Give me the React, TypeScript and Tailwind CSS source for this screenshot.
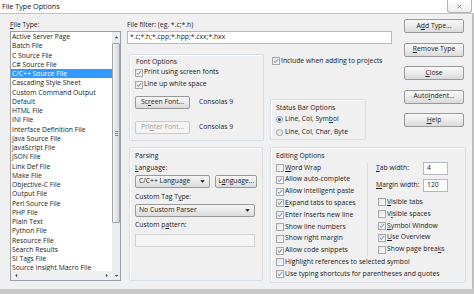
import clsx from "clsx";
import type { ReactNode } from "react";

const fileTypes = [
  "Active Server Page",
  "Batch File",
  "C Source File",
  "C# Source File",
  "C/C++ Source File",
  "Cascading Style Sheet",
  "Custom Command Output",
  "Default",
  "HTML File",
  "INI File",
  "Interface Definition File",
  "Java Source File",
  "JavaScript File",
  "JSON File",
  "Link Def File",
  "Make File",
  "Objective-C File",
  "Output File",
  "Perl Source File",
  "PHP File",
  "Plain Text",
  "Python File",
  "Resource File",
  "Search Results",
  "SI Tags File",
  "Source Insight Macro File",
];

function U({ children }: { children: ReactNode }) {
  return <span className="underline decoration-[0.5px] underline-offset-[1px]">{children}</span>;
}

function Btn({
  children,
  className,
  disabled,
}: {
  children: ReactNode;
  className?: string;
  disabled?: boolean;
}) {
  return (
    <div
      className={clsx(
        "flex items-center justify-center whitespace-nowrap rounded-[2px] border",
        disabled
          ? "border-[#c8cccf] bg-[#f4f4f4] text-[#a0a0a0]"
          : "border-[#999999] bg-linear-to-b from-[#f8f8f8] via-[#ececec] to-[#dadada] text-[#222]",
        className
      )}
    >
      {children}
    </div>
  );
}

function Box({ checked }: { checked?: boolean }) {
  return (
    <span className="flex h-[8px] w-[8px] shrink-0 items-center justify-center border border-[#a8a8a8] bg-linear-to-br from-[#e4e4e4] to-[#fcfcfc]">
      {checked && (
        <svg viewBox="0 0 8 8" className="h-[6px] w-[6px]">
          <path d="M1.3 4.3 L3.1 6 L6.7 1.5" stroke="#4868a0" strokeWidth="1.1" fill="none" />
        </svg>
      )}
    </span>
  );
}

function CheckRow({
  checked,
  children,
  className,
}: {
  checked?: boolean;
  children: ReactNode;
  className?: string;
}) {
  return (
    <div className={clsx("flex items-center gap-[1px] whitespace-nowrap", className)}>
      <Box checked={checked} />
      <span>{children}</span>
    </div>
  );
}

function RadioRow({ checked, children }: { checked?: boolean; children: ReactNode }) {
  return (
    <div className="flex h-[13px] items-center gap-[2px] whitespace-nowrap">
      <span className="flex h-[7px] w-[7px] items-center justify-center rounded-full border border-[#a0a0a0] bg-linear-to-br from-[#dcdcdc] to-[#fafafa]">
        {checked && <span className="h-[3px] w-[3px] rounded-full bg-[#2a66b8]" />}
      </span>
      <span>{children}</span>
    </div>
  );
}

function Group({ className, children }: { className?: string; children: ReactNode }) {
  return (
    <div className={clsx("rounded-[2px] border border-[#d5dfe5] shadow-[inset_1px_1px_0_#ffffff]", className)}>
      {children}
    </div>
  );
}

function Arrow({ dir }: { dir: "up" | "down" | "left" | "right" }) {
  const d = {
    up: "M1 5 L4 2 L7 5 Z",
    down: "M1 3 L4 6 L7 3 Z",
    left: "M5 1 L2 4 L5 7 Z",
    right: "M3 1 L6 4 L3 7 Z",
  }[dir];
  return (
    <svg viewBox="0 0 8 8" className="h-[5px] w-[5px]">
      <path d={d} fill="#4a4a4a" />
    </svg>
  );
}

function Combo({ text, className }: { text: string; className?: string }) {
  return (
    <div
      className={clsx(
        "flex h-[13px] items-center justify-between rounded-[2px] border border-[#999999] bg-linear-to-b from-[#f6f6f6] to-[#dcdcdc] pl-[3px] pr-[4px] text-[#222]",
        className
      )}
    >
      <span className="whitespace-nowrap">{text}</span>
      <svg viewBox="0 0 8 8" className="h-[5px] w-[5px]">
        <path d="M0.5 2 L4 6 L7.5 2 Z" fill="#111" />
      </svg>
    </div>
  );
}

function FileList() {
  return (
    <div className="flex h-[250px] w-[111px] border border-[#9aa0a8] bg-white">
      <div className="flex w-[101px] flex-col">
        <div className="h-[239px] overflow-hidden">
          {fileTypes.map((t, i) => (
            <div
              key={t}
              className={clsx(
                "h-[9.25px] whitespace-nowrap pl-[1px] leading-[9.25px]",
                i === 4 ? "bg-[#3399ff] text-white" : "text-[#222]"
              )}
            >
              {t}
            </div>
          ))}
        </div>
        <div className="flex h-[9px] items-center justify-between bg-[#f0f0f0] px-[3px]">
          <Arrow dir="left" />
          <Arrow dir="right" />
        </div>
      </div>
      <div className="flex w-[8px] flex-col bg-[#ececec]">
        <div className="flex h-[10px] items-center justify-center">
          <Arrow dir="up" />
        </div>
        <div className="mt-[1px] flex h-[180px] flex-col items-center justify-center gap-[1px] rounded-[1px] border border-[#a4a4a4] bg-linear-to-r from-[#f2f2f2] to-[#d8d8d8]">
          <span className="h-px w-[3px] bg-[#8a8a8a]" />
          <span className="h-px w-[3px] bg-[#8a8a8a]" />
          <span className="h-px w-[3px] bg-[#8a8a8a]" />
        </div>
        <div className="flex-1" />
        <div className="flex h-[10px] items-center justify-center">
          <Arrow dir="down" />
        </div>
      </div>
    </div>
  );
}

export default function App() {
  return (
    <div className="flex h-[294px] w-[474px] flex-col overflow-hidden bg-[#c8c8c8] font-['Open_Sans',sans-serif] text-[6.8px] leading-none text-[#222]">
      {/* title bar */}
      <div className="flex h-[14px] shrink-0 items-start justify-between border-b border-[#c4c4c4] bg-white pl-[2px]">
        <span className="mt-[3px] text-[7.2px] text-[#111]">File Type Options</span>
        <div className="mr-[2px] flex h-[13px] w-[25px] items-center justify-center rounded-b-[3px] border border-t-0 border-[#b5b5b5] bg-linear-to-b from-white to-[#ededed]">
          <svg viewBox="0 0 8 8" className="h-[5px] w-[5px]">
            <path d="M1 1 L7 7 M7 1 L1 7" stroke="#7a7a7a" strokeWidth="1.2" />
          </svg>
        </div>
      </div>

      {/* dialog body */}
      <div className="mr-[1px] flex h-[275px] shrink-0 border-r border-[#b8b8b8] bg-[#f0f0f0] pl-[10px] pt-[5px]">
        {/* file type list */}
        <div className="flex flex-col">
          <div className="h-[12px] leading-[12px]">
            <U>F</U>ile Type:
          </div>
          <FileList />
        </div>

        {/* right side */}
        <div className="ml-[6px] flex flex-col">
          <div className="flex">
            <div className="flex w-[265px] flex-col">
              <div className="h-[12px] leading-[12px]">File filter: (eg. *.c;*.h)</div>
              <div className="flex h-[13px] items-center border border-[#b5b8bf] bg-white pl-[2px]">
                *.c;*.h;*.cpp;*.hpp;*.cxx;*.hxx
              </div>

              <div className="mt-[10px] flex gap-[6px] pl-[2px]">
                <Group className="flex h-[87px] w-[135px] flex-col pl-[5px]">
                  <div className="h-[11.5px] pl-[1px] pt-[1px] leading-[11.5px]">Font Options</div>
                  <CheckRow checked className="h-[12px]">
                    Print using screen fonts
                  </CheckRow>
                  <CheckRow checked className="h-[12px]">
                    Line up white space
                  </CheckRow>
                  <div className="mt-[5.5px] flex items-center">
                    <Btn className="h-[13px] w-[55px]">
                      Sc<U>r</U>een Font...
                    </Btn>
                    <span className="ml-[9px]">Consolas 9</span>
                  </div>
                  <div className="mt-[12px] flex items-center">
                    <Btn disabled className="h-[13px] w-[55px]">
                      Pri<U>n</U>ter Font...
                    </Btn>
                    <span className="ml-[9px]">Consolas 9</span>
                  </div>
                </Group>

                <div className="flex w-[96px] flex-col">
                  <CheckRow checked className="mt-[2px] h-[10px] pl-[2px]">
                    Include when adding to projects
                  </CheckRow>
                  <Group className="mt-[33px] flex h-[41px] flex-col pl-[5px] pt-[1.5px]">
                    <div className="h-[11px] leading-[11px]">Status Bar Options</div>
                    <RadioRow checked>
                      Line, Col, Sym<U>b</U>ol
                    </RadioRow>
                    <RadioRow>Line, Col, Char, Byte</RadioRow>
                  </Group>
                </div>
              </div>
            </div>

            {/* buttons */}
            <div className="ml-[12px] flex w-[60px] flex-col gap-[9.5px]">
              <Btn className="h-[14px]">
                A<U>d</U>d Type...
              </Btn>
              <Btn className="h-[14px]">
                <U>R</U>emove Type
              </Btn>
              <Btn className="h-[14px]">
                <U>C</U>lose
              </Btn>
              <Btn className="h-[14px]">
                Auto <U>I</U>ndent...
              </Btn>
              <Btn className="h-[14px]">
                <U>H</U>elp
              </Btn>
            </div>
          </div>

          <div className="mt-[6px] flex gap-[7px] pl-[2px]">
            {/* parsing */}
            <Group className="flex h-[134px] w-[134px] flex-col px-[5px] pt-[1.5px]">
              <div className="h-[11px] leading-[11px]">Parsing</div>
              <div className="mt-[1px] h-[12px] leading-[12px]">
                <U>L</U>anguage:
              </div>
              <div className="mt-[1.5px] flex gap-[5px]">
                <Combo text="C/C++ Language" className="w-[76px]" />
                <Btn className="h-[13px] w-[42px]">
                  L<U>a</U>nguage...
                </Btn>
              </div>
              <div className="mt-[3px] h-[12px] leading-[12px]">
                Custom Tag T<U>y</U>pe:
              </div>
              <Combo text="No Custom Parser" className="mt-[1px] w-[120px]" />
              <div className="mt-[2px] h-[12px] leading-[12px]">
                Custom p<U>a</U>ttern:
              </div>
              <div className="mt-[3px] h-[13px] w-[120px] border border-[#d0d2d6] bg-[#f4f4f4]" />
            </Group>

            {/* editing */}
            <Group className="flex h-[136px] w-[196px] flex-col pl-[5px] pt-[1.5px]">
              <div className="h-[11px] leading-[11px]">Editing Options</div>
              <div className="mt-[1.6px] flex">
                <div className="flex w-[91px] flex-col">
                  <CheckRow className="h-[11.8px]">
                    <U>W</U>ord Wrap
                  </CheckRow>
                  <CheckRow checked className="h-[11.8px]">
                    Allow auto-complete
                  </CheckRow>
                  <CheckRow checked className="h-[11.8px]">
                    Allow intelligent paste
                  </CheckRow>
                  <CheckRow checked className="h-[11.8px]">
                    <U>E</U>xpand tabs to spaces
                  </CheckRow>
                  <CheckRow checked className="h-[11.8px]">
                    Enter inserts new line
                  </CheckRow>
                  <CheckRow className="h-[11.8px]">Show line numbers</CheckRow>
                  <CheckRow className="h-[11.8px]">Show right margin</CheckRow>
                  <CheckRow checked className="h-[11.8px]">
                    Allow code snippets
                  </CheckRow>
                </div>
                <div className="mt-[1px] h-[93px] w-px bg-[#d5dfe5]" />
                <div className="flex flex-col pl-[8px]">
                  <div className="flex h-[13px] items-center">
                    <span className="w-[47px]">
                      <U>T</U>ab width:
                    </span>
                    <span className="flex h-[13px] w-[25px] items-center border border-[#b5b8bf] bg-white pl-[3px]">
                      4
                    </span>
                  </div>
                  <div className="mt-[4px] flex h-[13px] items-center">
                    <span className="w-[47px]">
                      <U>M</U>argin width:
                    </span>
                    <span className="flex h-[13px] w-[25px] items-center border border-[#b5b8bf] bg-white pl-[3px]">
                      120
                    </span>
                  </div>
                  <div className="mt-[4.4px] flex flex-col pl-[2px]">
                    <CheckRow className="h-[11.8px]">
                      <U>V</U>isible tabs
                    </CheckRow>
                    <CheckRow className="h-[11.8px]">
                      V<U>i</U>sible spaces
                    </CheckRow>
                    <CheckRow checked className="h-[11.8px]">
                      <U>S</U>ymbol Window
                    </CheckRow>
                    <CheckRow checked className="h-[11.8px]">
                      <U>U</U>se Overview
                    </CheckRow>
                    <CheckRow className="h-[11.8px]">
                      Show page brea<U>k</U>s
                    </CheckRow>
                  </div>
                </div>
              </div>
              <CheckRow className="h-[11.8px]">Highlight references to selected symbol</CheckRow>
              <CheckRow checked className="h-[11.8px]">
                Use typing shortcuts for parentheses and quotes
              </CheckRow>
            </Group>
          </div>
        </div>
      </div>
    </div>
  );
}
